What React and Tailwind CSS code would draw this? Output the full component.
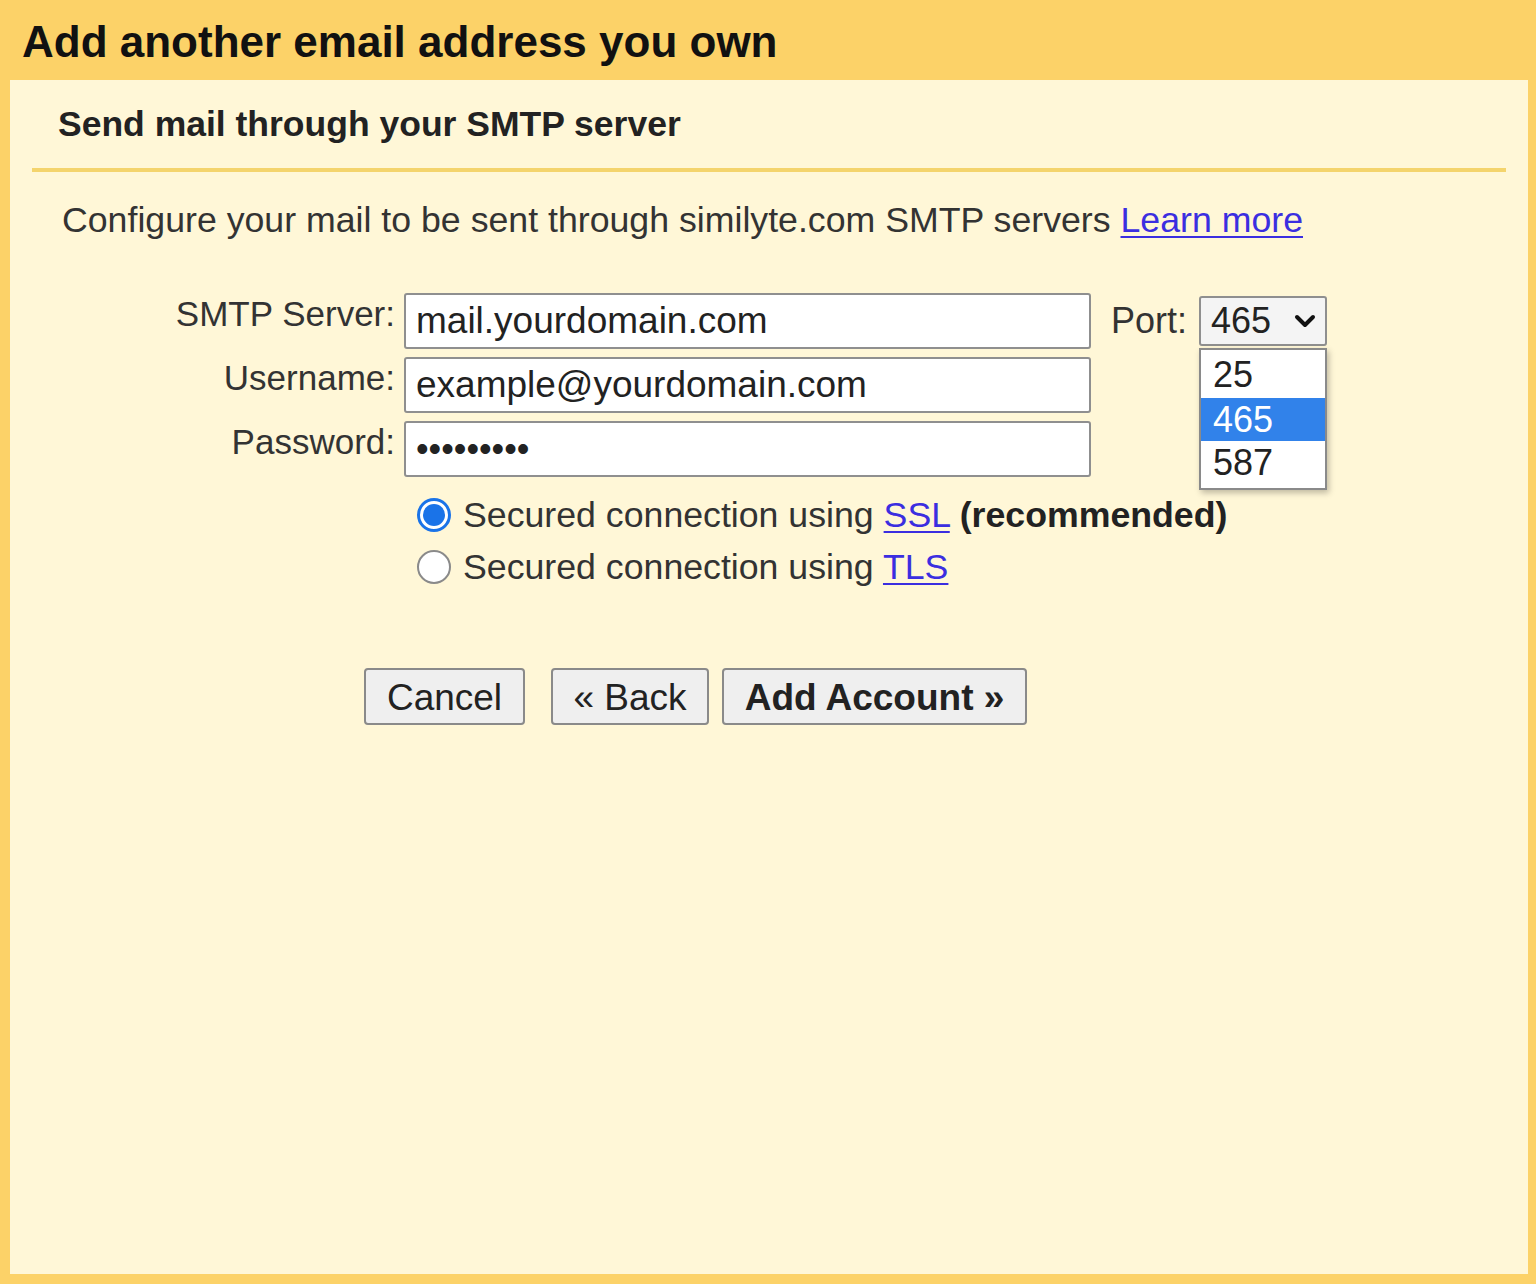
import React from "react";

const font = { fontFamily: '"Liberation Sans", Arial, sans-serif' };

const Field = ({ label, value, dots }) => (
  <div className="flex items-start">
    <div className="w-[385px] shrink-0 pt-[1px] text-right text-[35px] leading-[40px] text-[#333]">{label}</div>
    <div className="ml-[9px] flex h-[56px] w-[687px] items-center rounded-[3px] border-2 border-[#8f8f8f] bg-white px-[10px] text-[37px] text-[#222]">
      {dots ? <span className="text-[36px] leading-none">{value}</span> : value}
    </div>
  </div>
);

const Radio = ({ checked }) =>
  checked ? (
    <span className="flex h-[34px] w-[34px] items-center justify-center rounded-full border-[3px] border-[#1a73e8] bg-white">
      <span className="h-[22px] w-[22px] rounded-full bg-[#1a73e8]" />
    </span>
  ) : (
    <span className="h-[34px] w-[34px] rounded-full border-2 border-[#8a8a8a] bg-white" />
  );

export default function App() {
  return (
    <div style={font} className="flex h-[1284px] w-[1536px] flex-col bg-[#fcd268] pb-[10px] pl-[10px] pr-[8px]">
      <div className="flex h-[80px] items-center pl-[12px] pt-[4px]">
        <h1 className="text-[44px] font-bold text-[#111]">Add another email address you own</h1>
      </div>
      <div className="flex-1 bg-[#fff7d7]">
        <div className="pl-[48px] pt-[24px] text-[35.5px] font-bold leading-[40px] text-[#222]">Send mail through your SMTP server</div>
        <div className="mx-[22px] mt-[24px] h-[4px] bg-[#f4d46c]" />
        <p className="pl-[52px] pt-[28px] text-[35.7px] leading-[40px] text-[#333]">
          Configure your mail to be sent through similyte.com SMTP servers{" "}
          <a href="#" className="text-[#3b2ee0] underline decoration-2 underline-offset-4">Learn more</a>
        </p>

        <div className="relative mt-[53px] flex">
          <div className="flex flex-col gap-[8px]">
            <Field label="SMTP Server:" value="mail.yourdomain.com" />
            <Field label="Username:" value="example@yourdomain.com" />
            <Field label="Password:" value="•••••••••" dots />
          </div>
          <div className="ml-[20px] flex h-[56px] items-center gap-[12px]">
            <span className="text-[36px] text-[#333]">Port:</span>
            <div className="relative">
              <div className="flex h-[50px] w-[128px] items-center justify-between rounded-[3px] border-2 border-[#8f8f8f] bg-[#f4f4f4] pl-[10px] pr-[8px] text-[36px] text-[#222]">
                465
                <svg width="24" height="24" viewBox="0 0 24 24" fill="none" stroke="#111" strokeWidth="4" strokeLinecap="round" strokeLinejoin="round">
                  <path d="M4 8l8 8 8-8" />
                </svg>
              </div>
              <ul className="absolute left-0 top-[52px] z-10 w-[128px] border-2 border-[#8a8a8a] bg-white text-[36px] leading-[43px] text-[#222] shadow-[2px_3px_6px_rgba(0,0,0,0.25)]">
                <li className="pl-[12px] pt-[3px] pb-[2px]">25</li>
                <li className="bg-[#3182ea] pl-[12px] text-white">465</li>
                <li className="pl-[12px] pb-[4px]">587</li>
              </ul>
            </div>
          </div>
        </div>

        <div className="ml-[407px] mt-[20px] flex flex-col gap-[16px] text-[35.7px] leading-[36px] text-[#333]">
          <label className="flex items-center gap-[12px]">
            <Radio checked />
            <span>
              Secured connection using <a href="#" className="text-[#3b2ee0] underline decoration-2 underline-offset-4">SSL</a>{" "}
              <span className="font-bold text-[#222]">(recommended)</span>
            </span>
          </label>
          <label className="flex items-center gap-[12px]">
            <Radio />
            <span>
              Secured connection using <a href="#" className="text-[#3b2ee0] underline decoration-2 underline-offset-4">TLS</a>
            </span>
          </label>
        </div>

        <div className="ml-[354px] mt-[83px] flex text-[37px] text-[#222]">
          <button className="h-[57px] w-[161px] rounded-[4px] border-2 border-[#8a8a8a] bg-[#efefef]">Cancel</button>
          <button className="ml-[26px] h-[57px] w-[158px] rounded-[4px] border-2 border-[#8a8a8a] bg-[#efefef]">« Back</button>
          <button className="ml-[13px] h-[57px] w-[305px] rounded-[4px] border-2 border-[#8a8a8a] bg-[#efefef] font-bold">Add Account »</button>
        </div>
      </div>
    </div>
  );
}
